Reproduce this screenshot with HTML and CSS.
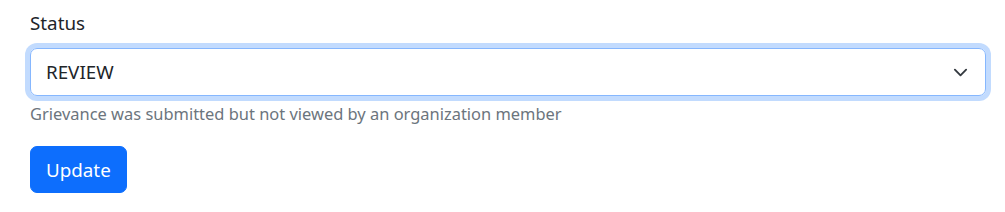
FILE: index.html
```html
<!DOCTYPE html>
<html lang="en">

<head>
    <meta charset="UTF-8">
    <meta name="viewport" content="width=device-width, initial-scale=1.0">
    <title>Grievance status</title>
    <link rel="stylesheet" href="styles.css">
</head>

<body>
    <form class="status-form">
        <div class="field">
            <label class="form-label" for="status">Status</label>
            <div class="form-select" id="status">
                <span class="select-value">REVIEW</span>
                <svg class="chevron" viewBox="0 0 16 16" width="15" height="15">
                    <path d="M2 5l6 6 6-6" fill="none" stroke="#343a40" stroke-width="2" stroke-linecap="round" stroke-linejoin="round"/>
                </svg>
            </div>
            <div class="form-text">Grievance was submitted but not viewed by an organization member</div>
        </div>
        <button type="button" class="btn btn-primary">Update</button>
    </form>
</body>

</html>
```

FILE: styles.css
```css
body {
    margin: 0;
    font-family: 'Noto Sans', 'Open Sans', sans-serif;
    font-size: 18.8px;
    line-height: 30px;
    color: #212529;
    background-color: #fff;
}

.status-form {
    padding: 8px 19px 0 30px;
}

.field {
    margin-bottom: 19px;
}

.form-label {
    display: inline-block;
    margin-bottom: 10px;
}

.form-select {
    display: flex;
    align-items: center;
    justify-content: space-between;
    height: 48px;
    box-sizing: border-box;
    padding: 0 17px 0 15px;
    border: 1px solid #86b7fe;
    border-radius: 7px;
    box-shadow: 0 0 0 5px rgba(13, 110, 253, 0.25);
}

.chevron {
    display: block;
}

.form-text {
    margin-top: 5px;
    font-size: 16.45px;
    line-height: 26px;
    color: #6c757d;
}

.btn {
    font-family: inherit;
    font-size: 18.8px;
    line-height: 30px;
    padding: 7.5px 15px;
    border-radius: 7px;
    cursor: pointer;
}

.btn-primary {
    color: #fff;
    background-color: #0d6efd;
    border: 1px solid #0d6efd;
}
```
